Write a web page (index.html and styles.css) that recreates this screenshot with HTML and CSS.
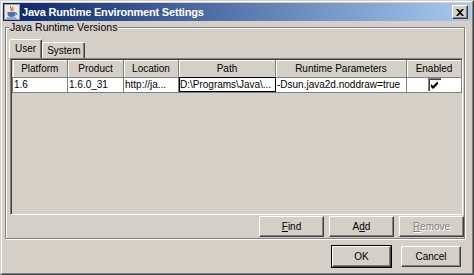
FILE: index.html
```html
<!DOCTYPE html>
<html>
<head>
<meta charset="utf-8">
<link rel="stylesheet" href="styles.css">
</head>
<body>
<div class="window">
  <div class="frame">
    <div class="titlebar">
      <svg class="app-icon" width="16" height="16" viewBox="0 0 16 16">
        <rect x="0.5" y="0.5" width="15" height="15" fill="#e8e8e8" stroke="#9a9a9a"/>
        <path d="M7 2 C5 4 9 5 7 7 M9 3 C8 4.5 10 5.5 8.5 7" stroke="#e0601c" stroke-width="1.2" fill="none"/>
        <path d="M3.5 8 H11.5 V10 C11.5 12 10 13 7.5 13 C5 13 3.5 12 3.5 10 Z" fill="#4a6fb5"/>
        <path d="M11.5 9 C13.5 9 13.5 11 11.5 11" stroke="#4a6fb5" stroke-width="1" fill="none"/>
        <path d="M2.5 14 H12.5" stroke="#4a6fb5" stroke-width="1"/>
      </svg>
      <span class="title">Java Runtime Environment Settings</span>
      <span class="close">
        <svg width="8" height="7" viewBox="0 0 8 7"><path d="M0 0h2l2 2 2-2h2L5 3.5 8 7H6L4 5 2 7H0l3-3.5z" fill="#000"/></svg>
      </span>
    </div>
    <div class="client">
      <fieldset class="group">
        <legend>Java Runtime Versions</legend>
        <div class="tabs">
          <div class="tab active">User</div>
          <div class="tab">System</div>
        </div>
        <div class="scroll">
          <table class="grid">
            <colgroup>
              <col class="c-platform"><col class="c-product"><col class="c-location">
              <col class="c-path"><col class="c-params"><col class="c-enabled">
            </colgroup>
            <thead>
              <tr>
                <th>Platform</th><th>Product</th><th>Location</th><th>Path</th><th>Runtime Parameters</th><th>Enabled</th>
              </tr>
            </thead>
            <tbody>
              <tr>
                <td>1.6</td><td>1.6.0_31</td><td>http://ja...</td><td class="focus">D:\Programs\Java\...</td><td>-Dsun.java2d.noddraw=true</td>
                <td class="center"><span class="check"><svg width="7" height="7" viewBox="0 0 7 7"><path d="M0 2v3l2 2 5-5V-1L2 4z" fill="#000"/></svg></span></td>
              </tr>
            </tbody>
          </table>
        </div>
        <div class="actions">
          <button class="btn"><u>F</u>ind</button>
          <button class="btn">A<u>d</u>d</button>
          <button class="btn disabled"><u>R</u>emove</button>
        </div>
      </fieldset>
      <div class="dialog-actions">
        <button class="btn default">OK</button>
        <button class="btn cancel">Cancel</button>
      </div>
    </div>
  </div>
</div>
</body>
</html>
```

FILE: styles.css
```css
* { box-sizing: border-box; }
html, body { margin: 0; padding: 0; }
body {
  background: #d4d0c8;
  font-family: "Liberation Sans", Arial, sans-serif;
  font-size: 10px;
  color: #000;
}
.window {
  width: 474px;
  height: 275px;
  border: 1px solid;
  border-color: #d4d0c8 #404040 #404040 #d4d0c8;
  background: #d4d0c8;
}
.frame {
  height: 100%;
  border: 1px solid;
  border-color: #fff #808080 #808080 #fff;
  padding: 1px;
  display: flex;
  flex-direction: column;
}
.titlebar {
  height: 18px;
  flex: none;
  display: flex;
  align-items: center;
  padding: 0 3px 0 1px;
  background: linear-gradient(to right, #0a246a, #a6caf0);
  color: #fff;
}
.app-icon { flex: none; margin-right: 2px; }
.title {
  font-weight: bold;
  font-size: 11px;
  letter-spacing: -0.2px;
  flex: 1;
  white-space: nowrap;
}
.close {
  width: 16px;
  height: 14px;
  display: flex;
  align-items: center;
  justify-content: center;
  background: #d4d0c8;
  border: 1px solid;
  border-color: #fff #404040 #404040 #fff;
  box-shadow: inset -1px -1px #808080;
}
.client {
  flex: 1;
  display: flex;
  flex-direction: column;
  padding: 0 6px 0 2px;
}
.group {
  margin: 0;
  height: 218px;
  padding: 0 0 1px 3px;
  border: 1px solid #808080;
  box-shadow: inset 1px 1px #fff, 1px 1px #fff;
  min-width: 0;
}
.group legend {
  padding: 0 1px;
  margin-left: 0;
  line-height: 13px;
  font-size: 10.5px;
  background: #d4d0c8;
}
.tabs {
  display: flex;
  align-items: flex-end;
  height: 19px;
  margin-top: 5px;
}
.tab {
  height: 16px;
  padding: 0 4px;
  line-height: 15px;
  border: 1px solid;
  border-bottom: none;
  border-color: #fff #404040 #404040 #fff;
  box-shadow: inset -1px 0 #808080;
  border-radius: 2px 2px 0 0;
}
.tab.active {
  height: 19px;
  line-height: 17px;
  padding: 0 5px;
}
.scroll {
  height: 157px;
  margin: 0 1px 0 1px;
  border: 1px solid;
  border-color: #808080 #fff #fff #808080;
  box-shadow: inset 1px 1px #404040, inset -1px -1px #d4d0c8;
  padding: 1px;
  background: #d4d0c8;
  overflow: hidden;
}
.grid {
  border-collapse: collapse;
  table-layout: fixed;
  width: 449px;
}
.c-platform { width: 55px; }
.c-product { width: 56px; }
.c-location { width: 55px; }
.c-path { width: 97px; }
.c-params { width: 131px; }
.c-enabled { width: 55px; }
.grid th {
  height: 17px;
  padding: 0;
  font-weight: normal;
  text-align: center;
  background: #d4d0c8;
  border-right: 1px solid #808080;
  border-bottom: 1px solid #808080;
  box-shadow: inset 1px 1px #fff;
  white-space: nowrap;
}
.grid td {
  height: 15px;
  padding: 0 1px;
  background: #fff;
  border: 1px solid #808080;
  white-space: nowrap;
  overflow: hidden;
  line-height: 13px;
}
.grid td.focus { outline: 1px solid #000; outline-offset: -1px; }
.grid td.center { text-align: center; }
.check {
  display: inline-flex;
  align-items: center;
  justify-content: center;
  width: 13px;
  height: 13px;
  vertical-align: top;
  border-top: 1px solid #808080;
  border-left: 1px solid #808080;
  box-shadow: inset 1px 1px #404040;
  background: #fff;
}
.actions {
  display: flex;
  justify-content: flex-end;
  gap: 5px;
  margin-top: 1px;
}
.btn {
  font: inherit;
  color: #000;
  width: 65px;
  height: 21px;
  padding: 0;
  background: #d4d0c8;
  border: 1px solid;
  border-color: #fff #404040 #404040 #fff;
  box-shadow: inset -1px -1px #808080;
}
.btn u { text-decoration: underline; }
.btn.disabled {
  color: #808080;
  text-shadow: 1px 1px #fff;
}
.dialog-actions {
  display: flex;
  justify-content: flex-end;
  gap: 10px;
  margin-top: 7px;
  padding-right: 4px;
}
.btn.default {
  width: 59px;
  outline: 1px solid #000;
}
.btn.cancel { width: 60px; }
```
